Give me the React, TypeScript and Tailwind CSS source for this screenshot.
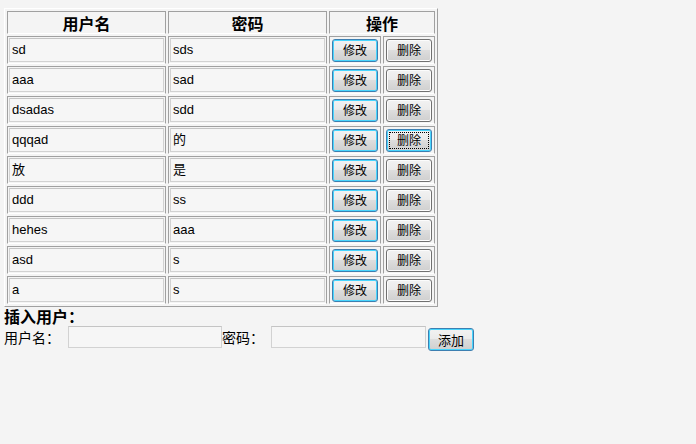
const rows: [string, string][] = [
  ['sd', 'sds'],
  ['aaa', 'sad'],
  ['dsadas', 'sdd'],
  ['qqqad', '的'],
  ['放', '是'],
  ['ddd', 'ss'],
  ['hehes', 'aaa'],
  ['asd', 's'],
  ['a', 's'],
]

const font = "font-['Liberation_Sans','Noto_Sans_CJK_SC',sans-serif]"
const cjk = "font-['Noto_Sans_CJK_SC','Liberation_Sans',sans-serif]"

const cell =
  'border border-t-[#a0a0a0] border-l-[#a0a0a0] border-r-[#a0a0a0] border-b-white p-[1px] align-middle'

const btnBase =
  "inline-flex h-[23px] w-[46px] items-center justify-center rounded-[3px] border text-[12px] leading-none text-black bg-[linear-gradient(#f2f2f2_0%,#ebebeb_45%,#dddddd_50%,#cfcfcf_100%)] " +
  cjk
const btnBlue = 'border-[#3c7fb1] shadow-[inset_0_0_0_1px_#48d5fd]'
const btnGray = 'border-[#707070] shadow-[inset_0_0_0_1px_#fcfcfc]'

function Field({ value }: { value: string }) {
  return (
    <div
      className={`flex h-[24px] w-full items-center border border-[#d2d2d2] border-t-[#c4c4c4] bg-[#f6f6f6] pl-[2px] text-[13px] text-black ${font}`}
    >
      {value}
    </div>
  )
}

export default function App() {
  return (
    <div className={`h-[444px] w-[696px] bg-[#f4f4f4] pl-[4px] pt-[8px] text-black ${font}`}>
      <table className="table-fixed w-[434px] border-separate border-spacing-[2px] border border-t-white border-l-white border-r-[#a0a0a0] border-b-[#a0a0a0]">
        <colgroup>
          <col className="w-[159px]" />
          <col className="w-[159px]" />
          <col className="w-[52px]" />
          <col className="w-[52px]" />
        </colgroup>
        <thead>
          <tr>
            <th className={`${cell} h-[23px] text-[16px] font-bold leading-none ${cjk}`}>用户名</th>
            <th className={`${cell} h-[23px] text-[16px] font-bold leading-none ${cjk}`}>密码</th>
            <th colSpan={2} className={`${cell} h-[23px] text-[16px] font-bold leading-none ${cjk}`}>
              操作
            </th>
          </tr>
        </thead>
        <tbody>
          {rows.map(([u, p], i) => (
            <tr key={i}>
              <td className={`${cell} h-[28px]`}>
                <Field value={u} />
              </td>
              <td className={`${cell} h-[28px]`}>
                <Field value={p} />
              </td>
              <td className={`${cell} h-[28px] text-center`}>
                <button type="button" className={`${btnBase} ${btnBlue}`}>
                  修改
                </button>
              </td>
              <td className={`${cell} h-[28px] text-center`}>
                <button type="button" className={`${btnBase} ${i === 3 ? btnBlue : btnGray}`}>
                  {i === 3 ? (
                    <span className="flex h-[17px] w-[40px] items-center justify-center border border-dotted border-black">
                      删除
                    </span>
                  ) : (
                    '删除'
                  )}
                </button>
              </td>
            </tr>
          ))}
        </tbody>
      </table>
      <div className={`mt-[1px] h-[18px] text-[16px] font-bold leading-[16px] ${cjk}`}>插入用户：</div>
      <div className={`flex items-start text-[14px] ${cjk}`}>
        <span className="mt-[3px] w-[64px] leading-[16px]">用户名：</span>
        <div className="h-[22px] w-[154px] border border-[#d2d2d2] border-t-[#c4c4c4] bg-[#f6f6f6]" />
        <span className="mt-[3px] w-[49px] leading-[16px]">密码：</span>
        <div className="h-[22px] w-[155px] border border-[#d2d2d2] border-t-[#c4c4c4] bg-[#f6f6f6]" />
        <button type="button" className={`${btnBase} ${btnBlue} ml-[2px] mt-[2px] text-[13px]`}>
          添加
        </button>
      </div>
    </div>
  )
}
